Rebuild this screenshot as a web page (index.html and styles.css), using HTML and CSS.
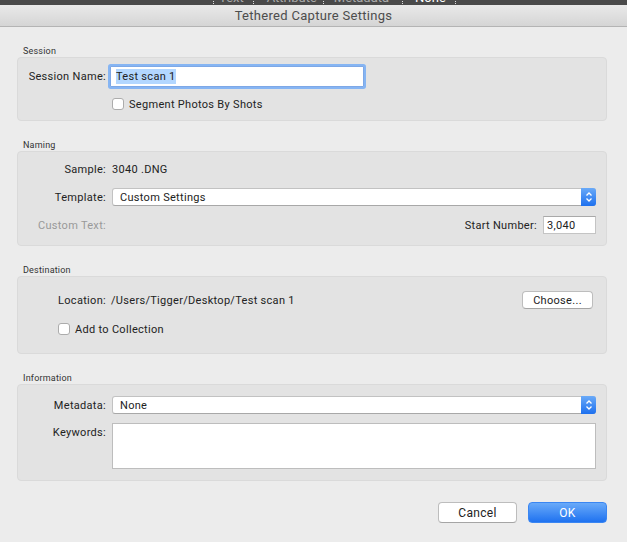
FILE: index.html
```html
<!DOCTYPE html>
<html lang="en">
<head>
<meta charset="UTF-8">
<title>Tethered Capture Settings</title>
<link rel="stylesheet" href="styles.css">
</head>
<body>

<!-- MENU STRIP (behind the sheet) -->
<div class="strip">
<div class="strip-items">
<span class="dots"></span><span class="item item-text">Text</span>
<span class="dots"></span><span class="item item-attr">Attribute</span>
<span class="dots"></span><span class="item item-meta">Metadata</span>
<span class="dots"></span><span class="item item-none">None</span>
<span class="dots"></span>
</div>
</div>

<!-- TITLE -->
<div class="titlebar">Tethered Capture Settings</div>

<div class="sheet">

<!-- SESSION -->
<div class="group-label">Session</div>
<div class="panel panel-session">
<div class="row">
<span class="lbl">Session Name:</span>
<div class="field field-name"><span class="selected">Test scan 1</span></div>
</div>
<div class="row row-check">
<span class="lbl"></span>
<label class="check"><span class="box"></span>Segment Photos By Shots</label>
</div>
</div>

<!-- NAMING -->
<div class="group-label">Naming</div>
<div class="panel panel-naming">
<div class="row">
<span class="lbl">Sample:</span>
<span class="value">3040 .DNG</span>
</div>
<div class="row">
<span class="lbl">Template:</span>
<div class="popup">
<span class="popup-text">Custom Settings</span>
<span class="stepper"><svg width="8" height="12" viewBox="0 0 8 12"><path d="M1.5 4.5 L4 2 L6.5 4.5 M1.5 7.5 L4 10 L6.5 7.5" fill="none" stroke="#fff" stroke-width="1.3"/></svg></span>
</div>
</div>
<div class="row row-start">
<span class="lbl dim">Custom Text:</span>
<span></span>
<span class="lbl">Start Number:</span>
<div class="field field-num">3,040</div>
</div>
</div>

<!-- DESTINATION -->
<div class="group-label">Destination</div>
<div class="panel panel-dest">
<div class="row row-loc">
<span class="lbl">Location:</span>
<span class="value path">/Users/Tigger/Desktop/Test scan 1</span>
<button class="btn btn-choose">Choose...</button>
</div>
<div class="row-plain">
<label class="check"><span class="box"></span>Add to Collection</label>
</div>
</div>

<!-- INFORMATION -->
<div class="group-label">Information</div>
<div class="panel panel-info">
<div class="row">
<span class="lbl">Metadata:</span>
<div class="popup">
<span class="popup-text">None</span>
<span class="stepper"><svg width="8" height="12" viewBox="0 0 8 12"><path d="M1.5 4.5 L4 2 L6.5 4.5 M1.5 7.5 L4 10 L6.5 7.5" fill="none" stroke="#fff" stroke-width="1.3"/></svg></span>
</div>
</div>
<div class="row row-keywords">
<span class="lbl">Keywords:</span>
<div class="textarea"></div>
</div>
</div>

<!-- BUTTONS -->
<div class="actions">
<button class="btn btn-cancel">Cancel</button>
<button class="btn btn-ok">OK</button>
</div>

</div>

</body>
</html>
```

FILE: styles.css
```css
body{
margin:0;
background:#ececec;
font-family:Roboto,"Liberation Sans",sans-serif;
font-size:11px;
letter-spacing:0.3px;
color:#222;
overflow:hidden;
}

/* MENU STRIP */
.strip{
height:5px;
background:#4a4a4a;
overflow:hidden;
}
.strip-items{
display:flex;
align-items:center;
height:16px;
margin-top:-11px;
padding-left:213px;
color:#aaa;
font-size:13px;
letter-spacing:0;
}
.dots{
width:0;
height:14px;
border-left:1px dotted #ddd;
}
.item-text{margin:0 9px 0 5px;}
.item-attr{margin:0 6px 0 13px;}
.item-meta{margin:0 13px 0 10px;}
.item-none{margin:0 9px 0 12px;color:#fff;}

/* TITLE */
.titlebar{
height:21px;
line-height:21px;
text-align:center;
font-size:13px;
color:#4d4d4d;
background:linear-gradient(#e9e9e9,#d5d5d5);
border-bottom:1px solid #b4b4b4;
}

/* SHEET */
.sheet{
padding:0 20px 0 17px;
}
.group-label{
margin-top:19px;
height:11px;
line-height:10px;
padding-left:6px;
font-size:9px;
letter-spacing:0.2px;
color:#333;
}
.panel{
box-sizing:border-box;
background:#e3e3e3;
border:1px solid #dadada;
border-radius:4px;
padding:0 10px 0 0;
}
.panel-session{height:64px;padding-top:8px;}
.panel-naming{height:95px;padding-top:8px;}
.panel-dest{height:78px;padding-top:14px;}
.panel-info{height:97px;padding-top:11px;}

/* ROWS */
.row{
display:grid;
grid-template-columns:88px 1fr;
column-gap:6px;
align-items:center;
min-height:18px;
}
.panel-naming .row + .row{margin-top:10px;}
.lbl{
text-align:right;
white-space:nowrap;
}
.dim{color:#999;}
.value{color:#222;}

/* TEXT FIELDS */
.field{
box-sizing:border-box;
height:21px;
background:#fff;
border:1px solid #b9b9b9;
}
.field-name{
width:254px;
margin-left:-2px;
padding:3px 0 0 5px;
box-shadow:0 0 0 2px #86b5f3;
border-color:#7ea8e6;
border-radius:1px;
}
.selected{
background:#b3d7ff;
padding:1px 0;
}
.field-num{
height:18px;
padding:2px 0 0 3px;
border-color:#c4c4c4;
border-top-color:#a9a9a9;
}
.row-start{
grid-template-columns:88px 1fr auto 53px;
}

/* CHECKBOX */
.row-check{margin-top:8px;}
.check{
display:flex;
align-items:center;
gap:5px;
}
.box{
box-sizing:border-box;
width:12px;
height:12px;
background:#fff;
border:1px solid #acacac;
border-radius:3px;
}
.row-plain{
margin:11px 0 0 40px;
height:18px;
display:flex;
align-items:center;
}

/* POPUP */
.popup{
box-sizing:border-box;
height:18px;
display:flex;
align-items:center;
background:#fff;
border:1px solid #c2c2c2;
border-bottom-color:#a8a8a8;
border-radius:3px;
}
.popup-text{
flex:1;
padding-left:7px;
}
.stepper{
width:15px;
height:18px;
margin-right:-1px;
display:flex;
align-items:center;
justify-content:center;
background:linear-gradient(#6aaaf8,#1d70ef);
border-radius:0 3px 3px 0;
}

/* DESTINATION */
.row-loc{
grid-template-columns:88px 1fr auto;
}
.path{margin-left:-1px;}

/* INFO */
.row-keywords{
margin-top:9px;
align-items:start;
}
.row-keywords .lbl{padding-top:3px;}
.textarea{
box-sizing:border-box;
height:46px;
background:#fff;
border:1px solid #bdbdbd;
}

/* BUTTONS */
.btn{
font-family:inherit;
font-size:11px;
letter-spacing:0.3px;
box-sizing:border-box;
background:#fff;
border:1px solid #bdbdbd;
border-bottom-color:#a5a5a5;
border-radius:4px;
color:#222;
padding:0;
}
.btn-choose{
width:71px;
height:18px;
margin-right:3px;
}
.actions{
display:flex;
justify-content:flex-end;
gap:11px;
margin-top:21px;
}
.btn-cancel,.btn-ok{
width:79px;
height:21px;
font-size:12px;
}
.btn-ok{
background:linear-gradient(#69aaf9,#1f72f0);
border-color:#3a86f2;
color:#fff;
}
```
